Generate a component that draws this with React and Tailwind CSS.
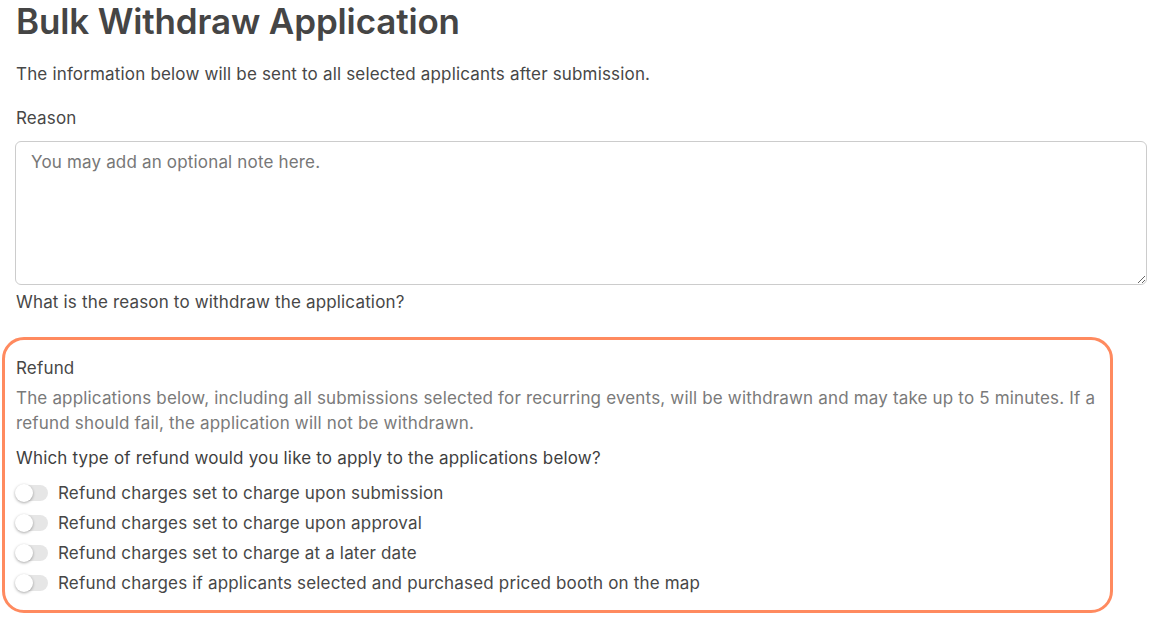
import React, { useState } from 'react';

const refundOptions = [
  'Refund charges set to charge upon submission',
  'Refund charges set to charge upon approval',
  'Refund charges set to charge at a later date',
  'Refund charges if applicants selected and purchased priced booth on the map',
];

const Toggle = ({ on, onClick }) => (
  <button
    onClick={onClick}
    className={`relative w-[32px] h-[16px] rounded-full shrink-0 transition-colors ${on ? 'bg-[#ff8a5f]' : 'bg-[#e6e6e6]'}`}
  >
    <span
      className={`absolute top-[-1px] w-[18px] h-[18px] rounded-full bg-white shadow-[0_1px_3px_rgba(0,0,0,0.35)] transition-all ${on ? 'left-[15px]' : 'left-[-1px]'}`}
    />
  </button>
);

const App = () => {
  const [checked, setChecked] = useState([false, false, false, false]);

  const flip = (idx) => {
    setChecked(checked.map((v, i) => (i === idx ? !v : v)));
  };

  return (
    <div className="min-h-screen bg-white text-[#474747] font-['Inter',sans-serif] text-[17px] tracking-[0.01em]">
      <div className="pl-[16px] pr-[26px]">
        {/* Header */}
        <h1 className="text-[35px] font-semibold leading-[42px] tracking-[-0.004em] text-[#454545]">Bulk Withdraw Application</h1>
        <p className="mt-[21px] leading-[22px]">
          The information below will be sent to all selected applicants after submission.
        </p>

        {/* Reason */}
        <label className="block mt-[22px] leading-[22px]">Reason</label>
        <textarea
          placeholder="You may add an optional note here."
          className="block mt-[12px] -ml-[1px] w-[calc(100%+1px)] h-[144px] rounded-[6px] border border-[#cccccc] px-[15px] py-[9px] text-[17px] leading-[22px] placeholder:text-[#777] outline-none"
        />
        <p className="mt-[6px] leading-[22px]">What is the reason to withdraw the application?</p>
      </div>

      {/* Refund box */}
      <div className="ml-[2px] mr-[60px] mt-[24px] border-[3px] border-[#ff8a5f] rounded-[22px] pl-[11px] pr-[8px] pt-[17px] pb-[12px]">
        <h3 className="leading-[22px]">Refund</h3>
        <p className="mt-[7px] leading-[25px] text-[#7a7a7a]">
          The applications below, including all submissions selected for recurring events, will be withdrawn and may take up to 5 minutes. If a refund should fail, the application will not be withdrawn.
        </p>
        <p className="mt-[11px] leading-[22px] text-[#3f3f3f]">
          Which type of refund would you like to apply to the applications below?
        </p>
        <div className="mt-[9px] flex flex-col">
          {refundOptions.map((opt, idx) => (
            <div key={idx} className="flex items-center gap-[10px] h-[30px]">
              <Toggle on={checked[idx]} onClick={() => flip(idx)} />
              <span className="leading-[22px]">{opt}</span>
            </div>
          ))}
        </div>
      </div>
    </div>
  );
};

export default App;
